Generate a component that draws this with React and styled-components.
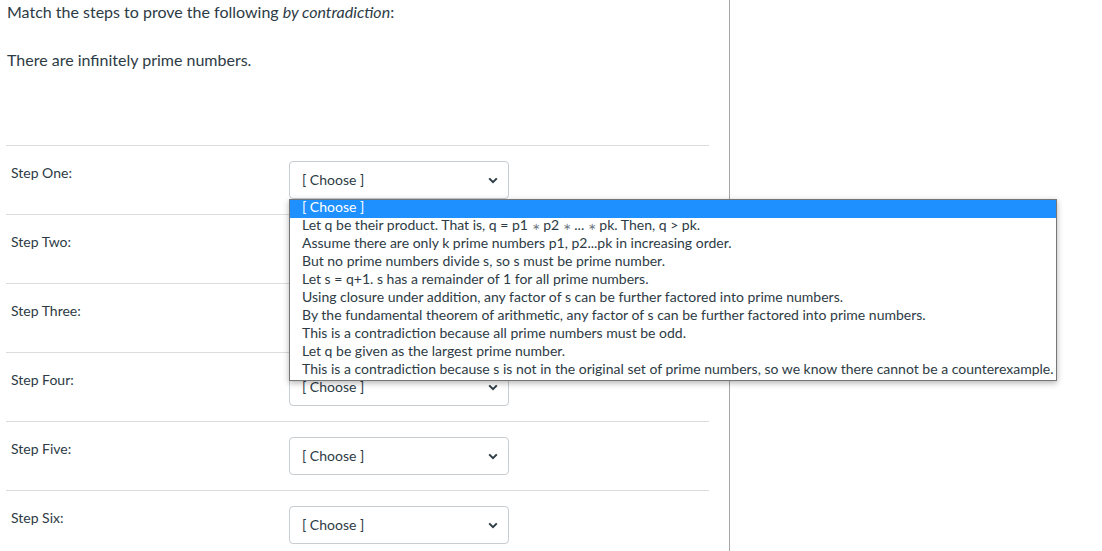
import React from "react";
import styled, { createGlobalStyle } from "styled-components";

const GlobalStyle = createGlobalStyle`
  html, body {
    margin: 0;
    padding: 0;
    background: #fff;
  }
  body {
    font-family: Lato, "Open Sans", "Liberation Sans", sans-serif;
    color: #2d3b45;
  }
`;

const steps = ["One", "Two", "Three", "Four", "Five", "Six"];

const Ast = styled.span`
  font-size: 10px;
  color: #6b7780;
`;

const options = [
  "[ Choose ]",
  <>
    Let q be their product. That is, q = p1 <Ast>{"\u2217"}</Ast> p2 <Ast>{"\u2217"}</Ast> ...{" "}
    <Ast>{"\u2217"}</Ast> pk. Then, q &gt; pk.
  </>,
  "Assume there are only k prime numbers p1, p2...pk in increasing order.",
  "But no prime numbers divide s, so s must be prime number.",
  "Let s = q+1. s has a remainder of 1 for all prime numbers.",
  "Using closure under addition, any factor of s can be further factored into prime numbers.",
  "By the fundamental theorem of arithmetic, any factor of s can be further factored into prime numbers.",
  "This is a contradiction because all prime numbers must be odd.",
  "Let q be given as the largest prime number.",
  "This is a contradiction because s is not in the original set of prime numbers, so we know there cannot be a counterexample.",
];

const Page = styled.div`
  position: relative;
  width: 1102px;
  height: 551px;
  overflow: hidden;
`;

const Column = styled.div`
  width: 730px;
  height: 100%;
  border-right: 1px solid #a6a6a6;
  box-sizing: border-box;
  padding: 0 20px 0 6px;
`;

const Question = styled.div`
  font-size: 16px;
  line-height: 24px;
  padding-left: 1px;

  p {
    margin: 0 0 24px;
  }
`;

const Answers = styled.div`
  margin-top: 73px;
`;

const Row = styled.div`
  display: flex;
  align-items: flex-start;
  border-top: 1px solid #dcdcdc;
  padding: 15px 0;
  height: 38px;
`;

const Label = styled.div`
  width: 278px;
  padding: 2px 0 0 5px;
  font-size: 14px;
  line-height: 20px;
`;

const Select = styled.div`
  position: relative;
  width: 220px;
  height: 38px;
  box-sizing: border-box;
  border: 1px solid #c7cdd1;
  border-radius: 4px;
  display: flex;
  align-items: center;
  justify-content: space-between;
  padding: 0 10px 2px 12px;
  font-size: 14px;
  background: #fff;

  svg {
    margin-top: 2px;
  }
`;

const Chevron = () => (
  <svg width="10" height="7" viewBox="0 0 10 7">
    <path d="M1.2 1.4 L5 5.2 L8.8 1.4" fill="none" stroke="#2d3b45" strokeWidth="2" />
  </svg>
);

const Menu = styled.ul`
  position: absolute;
  top: 199px;
  left: 289px;
  width: 768px;
  box-sizing: border-box;
  margin: 0;
  padding: 0;
  list-style: none;
  background: #fff;
  border: 1px solid #767676;
  box-shadow: 0 2px 6px rgba(0, 0, 0, 0.3);
  font-size: 14px;
  z-index: 2;
`;

const Option = styled.li`
  height: 18px;
  line-height: 14px;
  padding: 0 12px;
  white-space: nowrap;
  background: ${(p) => (p.$active ? "#1e90ff" : "#fff")};
  color: ${(p) => (p.$active ? "#fff" : "#2d3b45")};
`;

export default function App() {
  return (
    <>
      <GlobalStyle />
      <Page>
        <Column>
          <Question>
            <p>
              Match the steps to prove the following <em>by contradiction</em>:
            </p>
            <p>There are infinitely prime numbers.</p>
          </Question>
          <Answers>
            {steps.map((s) => (
              <Row key={s}>
                <Label>Step {s}:</Label>
                <Select>
                  <span>[ Choose ]</span>
                  <Chevron />
                </Select>
              </Row>
            ))}
          </Answers>
        </Column>
        <Menu>
          {options.map((o, i) => (
            <Option key={i} $active={i === 0}>
              {o}
            </Option>
          ))}
        </Menu>
      </Page>
    </>
  );
}
